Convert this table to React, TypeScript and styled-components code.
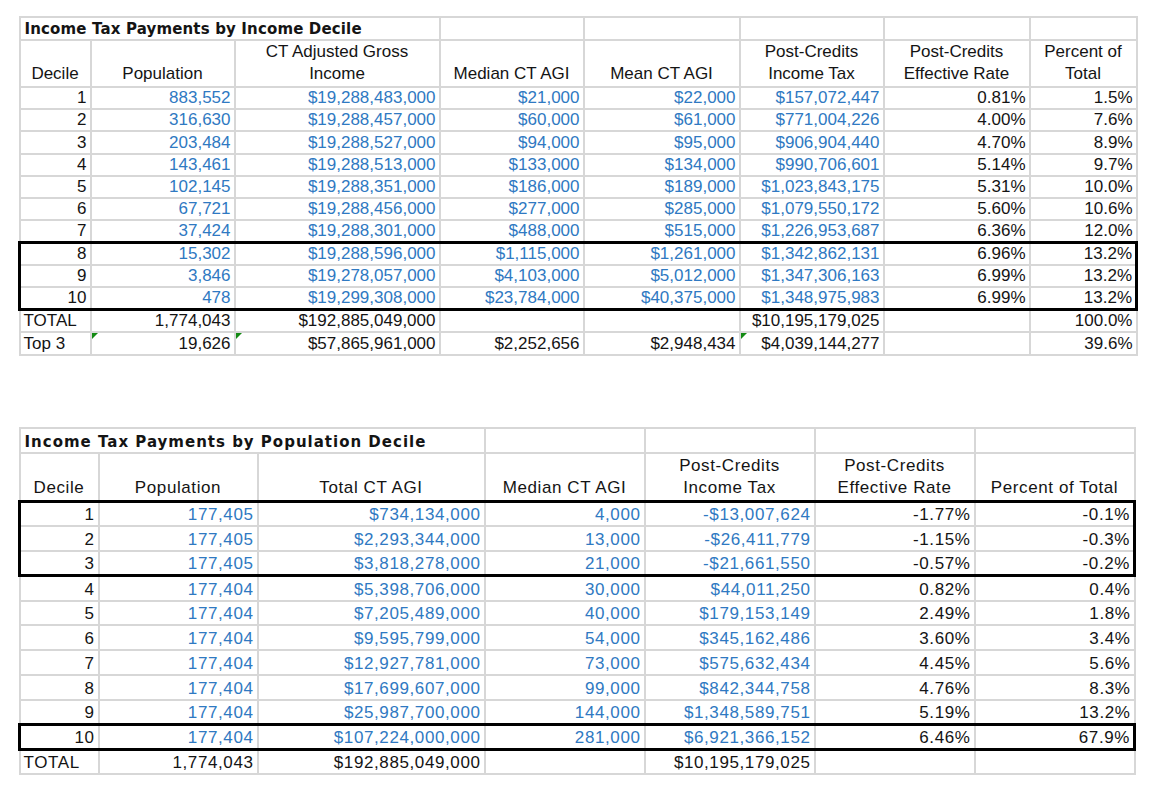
import React from 'react';
import styled, { createGlobalStyle, css } from 'styled-components';

type Box = 'top' | 'mid' | 'bottom' | 'both';
type Align = 'left' | 'right' | 'center';

interface DataRow {
  cells: string[];
  box?: Box;
  dark?: boolean;
  flags?: number[];
}

const BLUE = '#2f79c2';
const INK = '#141414';
const GRID = '#d7d7d7';

const incomeCols = [71, 144, 205, 144, 156, 144, 146, 107];
const incomeHead = [
  ['Decile'],
  ['Population'],
  ['CT Adjusted Gross', 'Income'],
  ['Median CT AGI'],
  ['Mean CT AGI'],
  ['Post-Credits', 'Income Tax'],
  ['Post-Credits', 'Effective Rate'],
  ['Percent of', 'Total'],
];
// columns 1..5 are inputs (blue), the rest are computed
const incomeBlue = [1, 2, 3, 4, 5];
const incomeRows: DataRow[] = [
  { cells: ['1', '883,552', '$19,288,483,000', '$21,000', '$22,000', '$157,072,447', '0.81%', '1.5%'] },
  { cells: ['2', '316,630', '$19,288,457,000', '$60,000', '$61,000', '$771,004,226', '4.00%', '7.6%'] },
  { cells: ['3', '203,484', '$19,288,527,000', '$94,000', '$95,000', '$906,904,440', '4.70%', '8.9%'] },
  { cells: ['4', '143,461', '$19,288,513,000', '$133,000', '$134,000', '$990,706,601', '5.14%', '9.7%'] },
  { cells: ['5', '102,145', '$19,288,351,000', '$186,000', '$189,000', '$1,023,843,175', '5.31%', '10.0%'] },
  { cells: ['6', '67,721', '$19,288,456,000', '$277,000', '$285,000', '$1,079,550,172', '5.60%', '10.6%'] },
  { cells: ['7', '37,424', '$19,288,301,000', '$488,000', '$515,000', '$1,226,953,687', '6.36%', '12.0%'] },
  { cells: ['8', '15,302', '$19,288,596,000', '$1,115,000', '$1,261,000', '$1,342,862,131', '6.96%', '13.2%'], box: 'top' },
  { cells: ['9', '3,846', '$19,278,057,000', '$4,103,000', '$5,012,000', '$1,347,306,163', '6.99%', '13.2%'], box: 'mid' },
  { cells: ['10', '478', '$19,299,308,000', '$23,784,000', '$40,375,000', '$1,348,975,983', '6.99%', '13.2%'], box: 'bottom' },
  { cells: ['TOTAL', '1,774,043', '$192,885,049,000', '', '', '$10,195,179,025', '', '100.0%'], dark: true },
  { cells: ['Top 3', '19,626', '$57,865,961,000', '$2,252,656', '$2,948,434', '$4,039,144,277', '', '39.6%'], dark: true, flags: [1, 2, 5] },
];

const popCols = [79, 159, 227, 160, 170, 160, 160];
const popHead = [
  ['Decile'],
  ['Population'],
  ['Total CT AGI'],
  ['Median CT AGI'],
  ['Post-Credits', 'Income Tax'],
  ['Post-Credits', 'Effective Rate'],
  ['Percent of Total'],
];
const popBlue = [1, 2, 3, 4];
const popRows: DataRow[] = [
  { cells: ['1', '177,405', '$734,134,000', '4,000', '-$13,007,624', '-1.77%', '-0.1%'], box: 'top' },
  { cells: ['2', '177,405', '$2,293,344,000', '13,000', '-$26,411,779', '-1.15%', '-0.3%'], box: 'mid' },
  { cells: ['3', '177,405', '$3,818,278,000', '21,000', '-$21,661,550', '-0.57%', '-0.2%'], box: 'bottom' },
  { cells: ['4', '177,404', '$5,398,706,000', '30,000', '$44,011,250', '0.82%', '0.4%'] },
  { cells: ['5', '177,404', '$7,205,489,000', '40,000', '$179,153,149', '2.49%', '1.8%'] },
  { cells: ['6', '177,404', '$9,595,799,000', '54,000', '$345,162,486', '3.60%', '3.4%'] },
  { cells: ['7', '177,404', '$12,927,781,000', '73,000', '$575,632,434', '4.45%', '5.6%'] },
  { cells: ['8', '177,404', '$17,699,607,000', '99,000', '$842,344,758', '4.76%', '8.3%'] },
  { cells: ['9', '177,404', '$25,987,700,000', '144,000', '$1,348,589,751', '5.19%', '13.2%'] },
  { cells: ['10', '177,404', '$107,224,000,000', '281,000', '$6,921,366,152', '6.46%', '67.9%'], box: 'both' },
  { cells: ['TOTAL', '1,774,043', '$192,885,049,000', '', '$10,195,179,025', '', ''], dark: true },
];

interface SheetProps {
  title: string;
  cols: number[];
  head: string[][];
  rows: DataRow[];
  blue: number[];
  wide?: boolean;
}

const Sheet = ({ title, cols, head, rows, blue, wide }: SheetProps) => (
  <Table $wide={wide}>
    <colgroup>
      {cols.map((w, i) => (
        <col key={i} style={{ width: w }} />
      ))}
    </colgroup>
    <tbody>
      <TitleRow $wide={wide}>
        <TitleCell colSpan={3} $wide={wide}>{title}</TitleCell>
        {cols.slice(3).map((_, i) => (
          <Cell key={i} />
        ))}
      </TitleRow>
      <HeadRow $wide={wide}>
        {head.map((lines, i) => (
          <HeadCell key={i}>
            {lines.map((l, j) => (
              <React.Fragment key={j}>
                {j > 0 && <br />}
                {l}
              </React.Fragment>
            ))}
          </HeadCell>
        ))}
      </HeadRow>
      {rows.map((r, ri) => (
        <Row key={ri} $box={r.box} $wide={wide}>
          {r.cells.map((c, ci) => {
            const align: Align = ci === 0 && r.dark ? 'left' : 'right';
            return (
              <Cell key={ci} $align={align} $blue={!r.dark && blue.includes(ci)}>
                {r.flags?.includes(ci) && <Flag />}
                {c}
              </Cell>
            );
          })}
        </Row>
      ))}
    </tbody>
  </Table>
);

const App = () => (
  <>
    <GlobalStyle />
    <Page>
      <Sheet
        title="Income Tax Payments by Income Decile"
        cols={incomeCols}
        head={incomeHead}
        rows={incomeRows}
        blue={incomeBlue}
      />
      <Sheet
        title="Income Tax Payments by Population Decile"
        cols={popCols}
        head={popHead}
        rows={popRows}
        blue={popBlue}
        wide
      />
    </Page>
  </>
);

export default App;

const GlobalStyle = createGlobalStyle`
  body {
    margin: 0;
    background: #ffffff;
    font-family: "Liberation Sans", Arial, sans-serif;
    color: ${INK};
  }
`;

const Page = styled.div`
  display: flex;
  flex-direction: column;
  align-items: flex-start;
  gap: 71px;
  padding: 16px 0 0 18px;
`;

const Table = styled.table<{ $wide?: boolean }>`
  border-collapse: collapse;
  table-layout: fixed;
  font-size: 17px;
  letter-spacing: ${(p) => (p.$wide ? '0.6px' : '0')};
`;

const THICK = '3px solid #000';

const Row = styled.tr<{ $box?: Box; $wide?: boolean }>`
  height: ${(p) => (p.$wide ? '24.8px' : '22.2px')};
  ${(p) =>
    (p.$box === 'top' || p.$box === 'both') &&
    css`
      & > td {
        border-top: ${THICK};
      }
    `}
  ${(p) =>
    (p.$box === 'bottom' || p.$box === 'both') &&
    css`
      & > td {
        border-bottom: ${THICK};
      }
    `}
  ${(p) =>
    p.$box &&
    css`
      & > td:first-child {
        border-left: ${THICK};
      }
      & > td:last-child {
        border-right: ${THICK};
      }
    `}
`;

const TitleRow = styled.tr<{ $wide?: boolean }>`
  height: ${(p) => (p.$wide ? '25px' : '23px')};
`;

const HeadRow = styled.tr<{ $wide?: boolean }>`
  height: ${(p) => (p.$wide ? '49px' : '44px')};
`;

const Cell = styled.td<{ $align?: Align; $blue?: boolean }>`
  position: relative;
  border: 2px solid ${GRID};
  padding: 0 3px;
  line-height: 20px;
  vertical-align: bottom;
  white-space: nowrap;
  overflow: hidden;
  text-align: ${(p) => p.$align || 'right'};
  color: ${(p) => (p.$blue ? BLUE : INK)};
`;

const TitleCell = styled(Cell)<{ $wide?: boolean }>`
  text-align: left;
  padding-left: 4px;
  font-family: "DejaVu Sans", Verdana, sans-serif;
  font-weight: bold;
  font-size: 15px;
  letter-spacing: ${(p) => (p.$wide ? '1px' : '0.15px')};
  line-height: 20px;
`;

const HeadCell = styled(Cell)`
  text-align: center;
  line-height: 22px;
  padding-bottom: 1px;
`;

const Flag = styled.span`
  position: absolute;
  top: 0;
  left: 0;
  width: 0;
  height: 0;
  border-top: 6px solid #138a13;
  border-right: 6px solid transparent;
`;
